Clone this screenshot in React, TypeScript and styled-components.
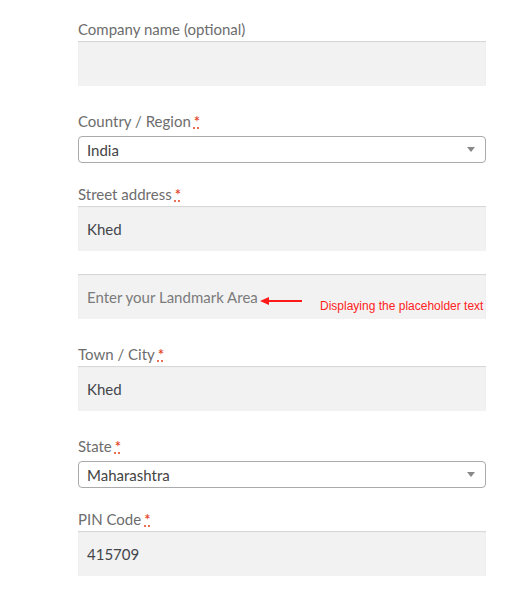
import React from 'react';
import styled, { createGlobalStyle } from 'styled-components';

const GlobalStyle = createGlobalStyle`
  body {
    margin: 0;
    background: #ffffff;
    font-family: Lato, "Noto Sans", sans-serif;
  }
`;

const Form = styled.form`
  width: 408px;
  padding: 17px 0 0 78px;
`;

const Row = styled.p<{ $select?: boolean }>`
  margin: 0 0 ${(p) => (p.$select ? '19px' : '23px')};
  position: relative;
`;

const Label = styled.label`
  display: block;
  font-size: 15px;
  line-height: 24px;
  color: #6d6d6d;
`;

const Required = styled.abbr`
  color: #e2401c;
  font-weight: 600;
  text-decoration: underline dotted;
  margin-left: 3px;
  cursor: help;
`;

const TextInput = styled.input`
  display: block;
  box-sizing: border-box;
  width: 100%;
  height: 45px;
  margin: 0;
  padding: 0 9px;
  border: 0;
  background: #f2f2f2;
  box-shadow: inset 0 1px 1px rgba(0, 0, 0, 0.125);
  font-family: inherit;
  font-size: 15px;
  color: #43454b;
  outline: none;

  &::placeholder {
    color: #7b7b7b;
  }
`;

const SelectBox = styled.div`
  box-sizing: border-box;
  height: 27px;
  margin-top: 3px;
  padding: 0 8px;
  border: 1px solid #aaaaaa;
  border-radius: 4px;
  background: #ffffff;
  display: flex;
  align-items: center;
  justify-content: space-between;
  font-size: 15px;
  color: #444444;
`;

const Caret = styled.span`
  width: 0;
  height: 0;
  border-left: 4px solid transparent;
  border-right: 4px solid transparent;
  border-top: 5px solid #888888;
  margin-right: 2px;
`;

const Note = styled.div`
  position: absolute;
  top: 15px;
  left: 182px;
  display: flex;
  align-items: center;
  gap: 18px;
  pointer-events: none;
`;

const NoteText = styled.span`
  font-family: "Liberation Sans", Arial, sans-serif;
  font-size: 12px;
  color: #ff2222;
  margin-top: 10px;
`;

const Field = ({ label, value, required }: { label: string; value: string; required?: boolean }) => (
  <Row>
    <Label>
      {label}
      {required && <Required title="required">*</Required>}
    </Label>
    <TextInput defaultValue={value} />
  </Row>
);

const Select = ({ label, value }: { label: string; value: string }) => (
  <Row $select>
    <Label>
      {label}
      <Required title="required">*</Required>
    </Label>
    <SelectBox>
      <span>{value}</span>
      <Caret />
    </SelectBox>
  </Row>
);

const App = () => {
  return (
    <>
      <GlobalStyle />
      <Form>
        <Field label="Company name (optional)" value="" />
        <Select label="Country / Region" value="India" />
        <Field label="Street address" value="Khed" required />
        <Row>
          <TextInput placeholder="Enter your Landmark Area" />
          <Note>
            <svg width="42" height="10" viewBox="0 0 42 10">
              <line x1="6" y1="5" x2="42" y2="5" stroke="#ff1a1a" strokeWidth="2" />
              <polygon points="0,5 9,1 9,9" fill="#ff1a1a" />
            </svg>
            <NoteText>Displaying the placeholder text</NoteText>
          </Note>
        </Row>
        <Field label="Town / City" value="Khed" required />
        <Select label="State" value="Maharashtra" />
        <Field label="PIN Code" value="415709" required />
      </Form>
    </>
  );
};

export default App;
